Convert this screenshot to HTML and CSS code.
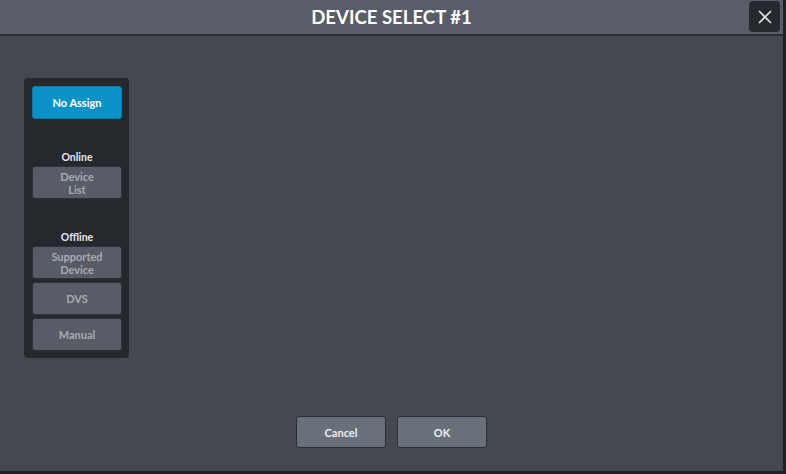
FILE: index.html
```html
<!DOCTYPE html>
<html>
<head>
<meta charset="utf-8">
<link rel="stylesheet" href="styles.css">
</head>
<body>
<div class="app">
  <header class="header">
    <div class="title">DEVICE SELECT #1</div>
    <button class="close" aria-label="Close">
      <svg width="14" height="14" viewBox="0 0 14 14"><path d="M1 1 L13 13 M13 1 L1 13" stroke="#e4e6ea" stroke-width="1.6" fill="none"/></svg>
    </button>
  </header>
  <main class="main">
    <div class="panel">
      <button class="btn btn-blue">No Assign</button>
      <div class="label">Online</div>
      <button class="btn">Device<br>List</button>
      <div class="label">Offline</div>
      <div class="stack">
        <button class="btn">Supported<br>Device</button>
        <button class="btn">DVS</button>
        <button class="btn">Manual</button>
      </div>
    </div>
  </main>
  <footer class="footer">
    <button class="fbtn">Cancel</button>
    <button class="fbtn">OK</button>
  </footer>
</div>
</body>
</html>
```

FILE: styles.css
```css
* { box-sizing: border-box; }
html, body { margin: 0; padding: 0; }
body {
  width: 786px;
  height: 474px;
  overflow: hidden;
  background: #1e2023;
  font-family: Lato, "Noto Sans", sans-serif;
}
.app {
  width: 786px;
  height: 474px;
  display: flex;
  flex-direction: column;
  border-right: 3px solid #1e2023;
  border-bottom: 3px solid #1e2023;
  background: #45484e;
}
.header {
  height: 36px;
  flex: none;
  background: #585d67;
  border-bottom: 2px solid #2a2d31;
  display: flex;
  align-items: center;
  justify-content: center;
  position: relative;
}
.title {
  color: #ffffff;
  font-weight: 700;
  font-size: 18.6px;
}
.close {
  position: absolute;
  right: 3px;
  top: 1px;
  width: 31px;
  height: 31px;
  border: none;
  border-radius: 4px;
  background: #26292d;
  display: flex;
  align-items: center;
  justify-content: center;
  padding: 0;
}
.main {
  flex: 1;
  padding: 42px 0 0 24px;
}
.panel {
  width: 105px;
  background: #25282c;
  border-radius: 4px;
  padding: 8px 7px 7px 8px;
  display: flex;
  flex-direction: column;
}
.btn {
  width: 90px;
  height: 33px;
  border: 1px solid #2e3136;
  border-radius: 3px;
  background: #585c66;
  color: #a8abb1;
  font-family: inherit;
  font-weight: 700;
  font-size: 11px;
  line-height: 13px;
  padding: 0;
}
.btn-blue {
  background: #0a91c6;
  border-color: #0a7fae;
  color: #ffffff;
}
.label {
  margin-top: 31px;
  height: 16px;
  line-height: 14px;
  text-align: center;
  color: #e6e7ea;
  font-weight: 700;
  font-size: 10.5px;
}
.stack {
  display: flex;
  flex-direction: column;
  gap: 3px;
}
.footer {
  flex: none;
  display: flex;
  justify-content: center;
  gap: 11px;
  padding-bottom: 23px;
}
.fbtn {
  width: 90px;
  height: 32px;
  border: 1px solid #2a2d31;
  border-radius: 3px;
  background: #6a707a;
  color: #eeeff1;
  font-family: inherit;
  font-weight: 700;
  font-size: 11px;
  padding: 0;
}
```
